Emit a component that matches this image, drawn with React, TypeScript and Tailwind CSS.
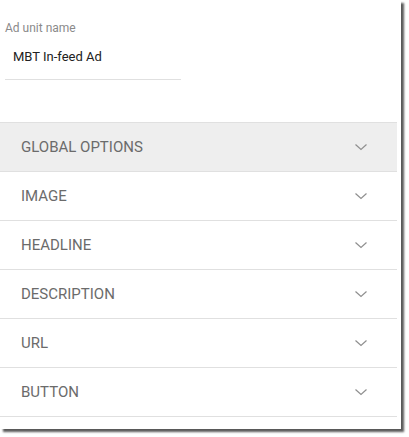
const sections = ["Global options", "Image", "Headline", "Description", "URL", "Button"]

function Chevron() {
  return (
    <svg width="14" height="8" viewBox="0 0 14 8" fill="none" className="text-[#8f8f8f]">
      <path d="M1.5 1.5l5.5 5 5.5-5" stroke="currentColor" strokeWidth="1.2" />
    </svg>
  )
}

export default function App() {
  return (
    <div className="w-[409px] h-[437px] bg-white font-['Roboto',sans-serif]">
      <div className="w-[401px] h-[429px] bg-white shadow-[3px_3px_2px_rgba(0,0,0,0.65)] pr-[4px]">
        <div className="pt-[19px] pl-[5px]">
          <label className="block text-[12px] leading-[18px] text-[#8a8a8a]">Ad unit name</label>
          <div className="w-[176px] border-b border-[#e0e0e0] pl-[8px] pt-[11px] pb-[13px] text-[13px] leading-[18px] text-[#212121]">
            MBT In-feed Ad
          </div>
        </div>
        <div className="mt-[42px] border-t border-[#e0e0e0]">
          {sections.map((s, i) => (
            <div
              key={s}
              className={`flex items-center justify-between h-[49px] pl-[21px] pr-[29px] border-b border-[#e0e0e0] ${i === 0 ? "bg-[#eeeeee]" : "bg-white"}`}
            >
              <span className="text-[15px] uppercase text-[#6b6b6b]">{s}</span>
              <Chevron />
            </div>
          ))}
        </div>
      </div>
    </div>
  )
}
